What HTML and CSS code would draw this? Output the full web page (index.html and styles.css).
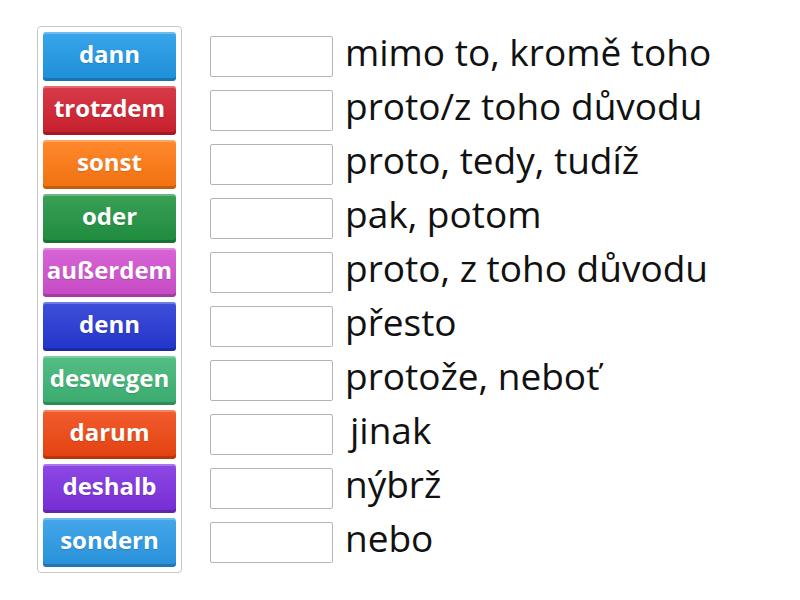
FILE: index.html
```html
<!DOCTYPE html>
<html lang="en">

<head>
  <meta charset="utf-8">
  <link rel="stylesheet" href="styles.css">
</head>

<body>
  <div class="board">
    <div class="tiles">
      <div class="tile blue">dann</div>
      <div class="tile red">trotzdem</div>
      <div class="tile orange">sonst</div>
      <div class="tile green">oder</div>
      <div class="tile pink">außerdem</div>
      <div class="tile navy">denn</div>
      <div class="tile mint">deswegen</div>
      <div class="tile scarlet">darum</div>
      <div class="tile violet">deshalb</div>
      <div class="tile sky">sondern</div>
    </div>
    <div class="targets">
      <div class="row"><div class="slot"></div><span class="label">mimo to, kromě toho</span></div>
      <div class="row"><div class="slot"></div><span class="label">proto/z toho důvodu</span></div>
      <div class="row"><div class="slot"></div><span class="label">proto, tedy, tudíž</span></div>
      <div class="row"><div class="slot"></div><span class="label">pak, potom</span></div>
      <div class="row"><div class="slot"></div><span class="label">proto, z toho důvodu</span></div>
      <div class="row"><div class="slot"></div><span class="label">přesto</span></div>
      <div class="row"><div class="slot"></div><span class="label">protože, neboť</span></div>
      <div class="row"><div class="slot"></div><span class="label indent">jinak</span></div>
      <div class="row"><div class="slot"></div><span class="label">nýbrž</span></div>
      <div class="row"><div class="slot"></div><span class="label">nebo</span></div>
    </div>
  </div>
</body>

</html>
```

FILE: styles.css
```css
body {
  margin: 0;
  background: #fff;
  font-family: "Open Sans", "DejaVu Sans", sans-serif;
}

.board {
  display: flex;
  align-items: flex-start;
  padding: 26px 0 0 37px;
}

/* draggable word tiles */
.tiles {
  display: flex;
  flex-direction: column;
  gap: 5px;
  padding: 5px;
  border: 1px solid #c8c8c8;
  border-radius: 4px;
}

.tile {
  width: 133px;
  height: 49px;
  box-sizing: border-box;
  border-radius: 3px;
  color: #fff;
  font-size: 24px;
  font-weight: 700;
  line-height: 44px;
  text-align: center;
  white-space: nowrap;
  text-shadow: 0 1px 1px rgba(0, 0, 0, 0.15);
  box-shadow: inset 0 2px 0 rgba(255, 255, 255, 0.25), inset 0 -3px 0 rgba(0, 0, 0, 0.18);
  background-image: linear-gradient(rgba(255, 255, 255, 0.12), rgba(0, 0, 0, 0.06));
}

.blue { background-color: #1e98e6; }
.red { background-color: #d2202f; }
.orange { background-color: #ff7810; }
.green { background-color: #1f9340; }
.pink { background-color: #d24fd0; }
.navy { background-color: #2437d6; }
.mint { background-color: #3db574; }
.scarlet { background-color: #f04510; }
.violet { background-color: #7d2fe0; }
.sky { background-color: #2a9ae6; }

/* answer rows */
.targets {
  display: flex;
  flex-direction: column;
  gap: 5px;
  padding-top: 6px;
  margin-left: 28px;
}

.row {
  display: flex;
  align-items: center;
  height: 49px;
}

.slot {
  width: 123px;
  height: 41px;
  box-sizing: border-box;
  border: 1px solid #b4b4b4;
  border-radius: 2px;
  background: #fff;
}

.label {
  margin-left: 12px;
  padding-bottom: 11px;
  font-size: 37px;
  line-height: 37px;
  color: #111;
  white-space: nowrap;
}

.indent {
  margin-left: 17px;
}
```
